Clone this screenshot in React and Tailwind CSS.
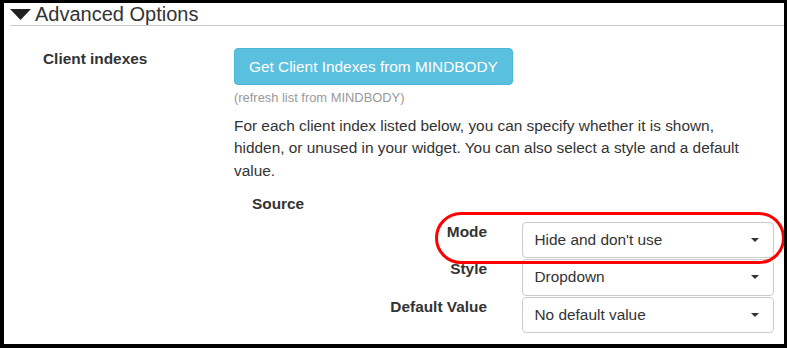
import React from "react";

const Caret = () => (
  <svg
    width="8"
    height="4"
    viewBox="0 0 8 4"
    className="absolute right-[14px] top-1/2 -translate-y-1/2"
  >
    <path d="M0 0h8L4 4z" fill="#333" />
  </svg>
);

const Select = ({ value }) => (
  <div className="relative h-[36.5px] w-[252px] rounded-[4px] border border-[#ccc] bg-white pl-3 text-[15.4px] leading-[34.5px] text-[#333]">
    {value}
    <Caret />
  </div>
);

const Row = ({ label, value }) => (
  <div className="flex items-start gap-[34.5px]">
    <div className="w-[253px] text-right font-bold leading-5">{label}</div>
    <Select value={value} />
  </div>
);

export default function App() {
  return (
    <div
      className="relative h-[348px] w-[787px] overflow-hidden border-b-4 border-l-4 border-r-[3px] border-t-[3px] border-black bg-white text-[15.4px] text-[#333]"
      style={{ fontFamily: '"Liberation Sans", Arial, sans-serif' }}
    >
      {/* section header */}
      <div className="ml-[6px] flex h-[23px] items-start gap-1 border-b border-[#ccc]">
        <svg width="21" height="11" viewBox="0 0 21 11" className="mt-[6px]">
          <path d="M0 0h21L10.5 11z" fill="#222" />
        </svg>
        <span className="text-[20px] leading-[22px] text-[#333]">
          Advanced Options
        </span>
      </div>

      <div className="flex pt-[22px]">
        <div className="w-[230px] pl-[39px] pt-px font-bold leading-5">
          Client indexes
        </div>

        <div className="flex-1">
          <button
            type="button"
            className="h-[37px] rounded-[4px] border border-[#46b8da] bg-[#5bc0de] px-[14px] text-[15.4px] leading-[21px] text-white"
          >
            Get Client Indexes from MINDBODY
          </button>
          <div className="mt-1 text-[12.9px] leading-[18px] text-[#999]">
            (refresh list from MINDBODY)
          </div>
          <p className="mt-2 whitespace-nowrap leading-[22.3px]">
            For each client index listed below, you can specify whether it is shown,
            <br />
            hidden, or unused in your widget. You can also select a style and a default
            <br />
            value.
          </p>
          <div className="mt-3 pl-[18px] font-bold leading-5">Source</div>

          <div className="mt-[7.7px] flex flex-col gap-px">
            <Row label="Mode" value="Hide and don't use" />
            <Row label="Style" value="Dropdown" />
            <Row label="Default Value" value="No default value" />
          </div>
        </div>
      </div>

      {/* red annotation */}
      <div className="pointer-events-none absolute left-[431px] top-[208.5px] h-[52.5px] w-[350px] rounded-[26px] border-[3px] border-[#f00]" />
    </div>
  );
}
